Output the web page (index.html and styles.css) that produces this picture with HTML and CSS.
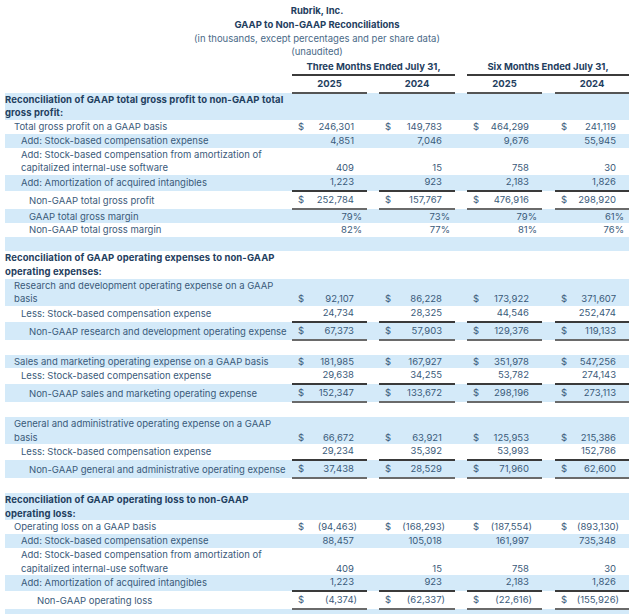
FILE: index.html
```html
<!DOCTYPE html>
<html lang="en">
<head>
    <meta charset="UTF-8">
    <title>Rubrik GAAP to Non-GAAP Reconciliations</title>
    <link rel="stylesheet" href="styles.css">
</head>
<body>
<div class="report">
    <table class="recon">
        <colgroup>
            <col class="c-label">
            <col class="c-val">
            <col class="c-gap">
            <col class="c-val2">
            <col class="c-gap">
            <col class="c-val">
            <col class="c-gap2">
            <col class="c-val3">
        </colgroup>
        <thead>
            <tr><th colspan="8" class="title">Rubrik, Inc.</th></tr>
            <tr><th colspan="8" class="title">GAAP to Non-GAAP Reconciliations</th></tr>
            <tr><th colspan="8" class="sub">(in thousands, except percentages and per share data)</th></tr>
            <tr><th colspan="8" class="sub">(unaudited)</th></tr>
            <tr class="period">
                <th></th>
                <th colspan="3" class="line">Three Months Ended July 31,</th>
                <th></th>
                <th colspan="3" class="line">Six Months Ended July 31,</th>
            </tr>
            <tr class="years">
                <th></th>
                <th class="line">2025</th><th></th><th class="line">2024</th><th></th>
                <th class="line">2025</th><th></th><th class="line">2024</th>
            </tr>
        </thead>
        <tbody>
            <tr class="shade"><td class="head">Reconciliation of GAAP total gross profit to non-GAAP total gross profit:</td><td></td><td></td><td></td><td></td><td></td><td></td><td></td></tr>
            <tr>
                <td class="l1">Total gross profit on a GAAP basis</td>
                <td><span class="cur">$</span>246,301</td><td></td>
                <td><span class="cur">$</span>149,783</td><td></td>
                <td><span class="cur">$</span>464,299</td><td></td>
                <td><span class="cur">$</span>241,119</td>
            </tr>
            <tr class="shade">
                <td class="l2">Add: Stock-based compensation expense</td>
                <td>4,851</td><td></td><td>7,046</td><td></td><td>9,676</td><td></td><td>55,945</td>
            </tr>
            <tr>
                <td class="l2">Add: Stock-based compensation from amortization of capitalized internal-use software</td>
                <td>409</td><td></td><td>15</td><td></td><td>758</td><td></td><td>30</td>
            </tr>
            <tr class="shade pre">
                <td class="l2">Add: Amortization of acquired intangibles</td>
                <td>1,223</td><td></td><td>923</td><td></td><td>2,183</td><td></td><td>1,826</td>
            </tr>
            <tr class="total">
                <td class="l3">Non-GAAP total gross profit</td>
                <td><span class="cur">$</span>252,784</td><td class="gap"></td>
                <td><span class="cur">$</span>157,767</td><td class="gap"></td>
                <td><span class="cur">$</span>476,916</td><td class="gap"></td>
                <td><span class="cur">$</span>298,920</td>
            </tr>
            <tr class="shade pct">
                <td class="l3">GAAP total gross margin</td>
                <td>79%</td><td></td><td>73%</td><td></td><td>79%</td><td></td><td>61%</td>
            </tr>
            <tr class="pct">
                <td class="l3">Non-GAAP total gross margin</td>
                <td>82%</td><td></td><td>77%</td><td></td><td>81%</td><td></td><td>76%</td>
            </tr>
            <tr class="shade blank"><td colspan="8"></td></tr>

            <tr><td class="head">Reconciliation of GAAP operating expenses to non-GAAP operating expenses:</td><td></td><td></td><td></td><td></td><td></td><td></td><td></td></tr>
            <tr class="shade">
                <td class="l1">Research and development operating expense on a GAAP basis</td>
                <td><span class="cur">$</span>92,107</td><td></td>
                <td><span class="cur">$</span>86,228</td><td></td>
                <td><span class="cur">$</span>173,922</td><td></td>
                <td><span class="cur">$</span>371,607</td>
            </tr>
            <tr class="pre">
                <td class="l2">Less: Stock-based compensation expense</td>
                <td>24,734</td><td></td><td>28,325</td><td></td><td>44,546</td><td></td><td>252,474</td>
            </tr>
            <tr class="shade total">
                <td class="l3">Non-GAAP research and development operating expense</td>
                <td><span class="cur">$</span>67,373</td><td class="gap"></td>
                <td><span class="cur">$</span>57,903</td><td class="gap"></td>
                <td><span class="cur">$</span>129,376</td><td class="gap"></td>
                <td><span class="cur">$</span>119,133</td>
            </tr>
            <tr class="blank"><td colspan="8"></td></tr>
            <tr class="shade">
                <td class="l1">Sales and marketing operating expense on a GAAP basis</td>
                <td><span class="cur">$</span>181,985</td><td></td>
                <td><span class="cur">$</span>167,927</td><td></td>
                <td><span class="cur">$</span>351,978</td><td></td>
                <td><span class="cur">$</span>547,256</td>
            </tr>
            <tr class="pre">
                <td class="l2">Less: Stock-based compensation expense</td>
                <td>29,638</td><td></td><td>34,255</td><td></td><td>53,782</td><td></td><td>274,143</td>
            </tr>
            <tr class="shade total">
                <td class="l3">Non-GAAP sales and marketing operating expense</td>
                <td><span class="cur">$</span>152,347</td><td class="gap"></td>
                <td><span class="cur">$</span>133,672</td><td class="gap"></td>
                <td><span class="cur">$</span>298,196</td><td class="gap"></td>
                <td><span class="cur">$</span>273,113</td>
            </tr>
            <tr class="blank"><td colspan="8"></td></tr>
            <tr class="shade">
                <td class="l1">General and administrative operating expense on a GAAP basis</td>
                <td><span class="cur">$</span>66,672</td><td></td>
                <td><span class="cur">$</span>63,921</td><td></td>
                <td><span class="cur">$</span>125,953</td><td></td>
                <td><span class="cur">$</span>215,386</td>
            </tr>
            <tr class="pre">
                <td class="l2">Less: Stock-based compensation expense</td>
                <td>29,234</td><td></td><td>35,392</td><td></td><td>53,993</td><td></td><td>152,786</td>
            </tr>
            <tr class="shade total">
                <td class="l3">Non-GAAP general and administrative operating expense</td>
                <td><span class="cur">$</span>37,438</td><td class="gap"></td>
                <td><span class="cur">$</span>28,529</td><td class="gap"></td>
                <td><span class="cur">$</span>71,960</td><td class="gap"></td>
                <td><span class="cur">$</span>62,600</td>
            </tr>
            <tr class="blank"><td colspan="8"></td></tr>

            <tr class="shade"><td class="head">Reconciliation of GAAP operating loss to non-GAAP operating loss:</td><td></td><td></td><td></td><td></td><td></td><td></td><td></td></tr>
            <tr class="neg">
                <td class="l1">Operating loss on a GAAP basis</td>
                <td><span class="cur">$</span>(94,463)</td><td></td>
                <td><span class="cur">$</span>(168,293)</td><td></td>
                <td><span class="cur">$</span>(187,554)</td><td></td>
                <td><span class="cur">$</span>(893,130)</td>
            </tr>
            <tr class="shade">
                <td class="l2">Add: Stock-based compensation expense</td>
                <td>88,457</td><td></td><td>105,018</td><td></td><td>161,997</td><td></td><td>735,348</td>
            </tr>
            <tr>
                <td class="l2">Add: Stock-based compensation from amortization of capitalized internal-use software</td>
                <td>409</td><td></td><td>15</td><td></td><td>758</td><td></td><td>30</td>
            </tr>
            <tr class="shade pre">
                <td class="l2">Add: Amortization of acquired intangibles</td>
                <td>1,223</td><td></td><td>923</td><td></td><td>2,183</td><td></td><td>1,826</td>
            </tr>
            <tr class="total neg">
                <td class="l4">Non-GAAP operating loss</td>
                <td><span class="cur">$</span>(4,374)</td><td class="gap"></td>
                <td><span class="cur">$</span>(62,337)</td><td class="gap"></td>
                <td><span class="cur">$</span>(22,616)</td><td class="gap"></td>
                <td><span class="cur">$</span>(155,926)</td>
            </tr>
            <tr class="shade blank"><td colspan="8"></td></tr>
        </tbody>
    </table>
</div>
</body>
</html>
```

FILE: styles.css
```css
body, html {
    margin: 0;
    background-color: #ffffff;
    font-family: Inter, "Noto Sans", sans-serif;
    color: #3a5a7a;
}

.report {
    padding: 4px 0 0 5px;
}

.recon {
    width: 624px;
    border-collapse: collapse;
    table-layout: fixed;
    font-size: 9.5px;
    line-height: 13.75px;
}

.c-label { width: 287px; }
.c-val { width: 75px; }
.c-val2 { width: 76px; }
.c-val3 { width: 74px; }
.c-gap { width: 12px; }
.c-gap2 { width: 13px; }

.recon th {
    padding: 0;
    font-weight: 700;
    color: #1f4060;
    text-align: center;
}

.recon th.sub {
    font-weight: 400;
    color: #4a6a88;
}

.recon th.line {
    border-bottom: 2px solid #3b3b3b;
}

.period th {
    padding-top: 1px;
}

.years th {
    padding-top: 1px;
    padding-bottom: 1px;
}

.years th.line {
    border-bottom-color: #555555;
}

.recon td {
    padding: 0 13px 0 6px;
    text-align: right;
    vertical-align: bottom;
    white-space: nowrap;
}

.recon td:first-child {
    text-align: left;
    white-space: normal;
    padding-right: 0;
}

.recon td:nth-child(2n+3) {
    padding: 0;
}

.cur {
    float: left;
}

.shade td {
    background-color: #d4eaf9;
}

.recon td.head {
    font-weight: 700;
    color: #1f4060;
    letter-spacing: 0.1px;
    padding-left: 0;
    padding-right: 2px;
}

.recon td.l1 { padding-left: 9px; }
.recon td.l2 { padding-left: 16px; }
.recon td.l3 { padding-left: 24px; }
.recon td.l4 { padding-left: 32px; }

.pre td {
    padding-bottom: 1px;
}

.total td {
    padding-top: 1px;
    padding-bottom: 1px;
}

.total td:nth-child(2n) {
    border-top: 2px solid #3a3a3a;
    border-bottom: 2px solid #6a6a6a;
}

.recon .pct td:nth-child(2n) {
    padding-right: 5px;
}

.recon .neg td:nth-child(2n) {
    padding-right: 10px;
}

.blank td {
    height: 14px;
    padding: 0;
}
```
